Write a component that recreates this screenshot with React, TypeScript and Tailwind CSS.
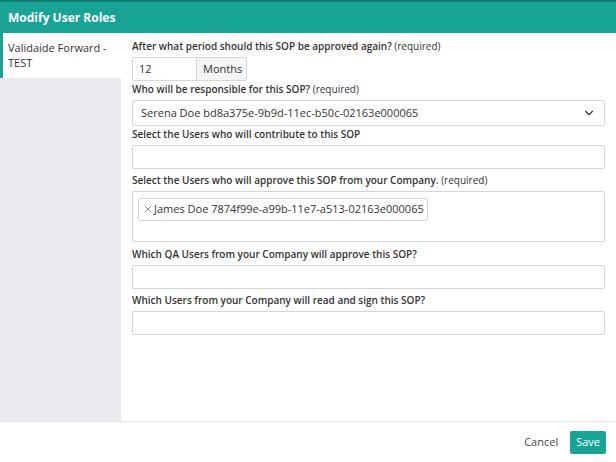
import { ChevronDown, X } from "lucide-react";

const Label = ({ text, req }: { text: string; req?: boolean }) => (
  <div className="text-[10px] font-semibold text-[#333] leading-[14px] mb-[4px]">
    {text}
    {req && <span className="font-normal"> (required)</span>}
  </div>
);

const Box = ({ h = "h-[24px]", children }: { h?: string; children?: React.ReactNode }) => (
  <div className={`${h} w-full border border-[#d4d6da] rounded-[2px] bg-white`}>{children}</div>
);

export default function App() {
  return (
    <div className="w-[616px] h-[462px] flex flex-col bg-white text-[#333]" style={{ fontFamily: "'Open Sans', sans-serif" }}>
      <div className="h-[33px] shrink-0 bg-[#17a495] border-t-2 border-[#0f7f74] flex items-center px-[8px] text-white text-[12px] font-bold">
        Modify User Roles
      </div>
      <div className="flex flex-1 min-h-0">
        <div className="w-[121px] bg-[#e9eaee]">
          <div className="bg-white border-l-[3px] border-[#17a495] h-[45px] pl-[5px] pt-[7px] text-[11px] leading-[15px]">
            Validaide Forward -<br />TEST
          </div>
        </div>
        <div className="flex-1 pl-[11px] pr-[11px] pt-[6px]">
          <Label text="After what period should this SOP be approved again?" req />
          <div className="flex h-[24px] text-[11px] mb-[1px]">
            <div className="w-[65px] border border-[#d4d6da] rounded-l-[2px] px-[6px] flex items-center">12</div>
            <div className="w-[50px] border border-l-0 border-[#d4d6da] bg-[#f4f5f7] rounded-r-[2px] px-[6px] flex items-center">Months</div>
          </div>
          <Label text="Who will be responsible for this SOP?" req />
          <div className="mb-[1px]">
            <Box h="h-[26px]">
              <div className="h-full flex items-center justify-between px-[8px] text-[11px]">
                <span>Serena Doe bd8a375e-9b9d-11ec-b50c-02163e000065</span>
                <ChevronDown size={14} strokeWidth={2} />
              </div>
            </Box>
          </div>
          <Label text="Select the Users who will contribute to this SOP" />
          <div className="mb-[4px]"><Box /></div>
          <Label text="Select the Users who will approve this SOP from your Company." req />
          <div className="mb-[5px]">
            <Box h="h-[51px]">
              <div className="p-[5px]">
                <div className="inline-flex items-center h-[23px] border border-[#d4d6da] rounded-[2px] px-[3px] text-[11px]">
                  <X size={12} strokeWidth={1.5} className="text-[#666]" />
                  <span>James Doe 7874f99e-a99b-11e7-a513-02163e000065</span>
                </div>
              </div>
            </Box>
          </div>
          <Label text="Which QA Users from your Company will approve this SOP?" />
          <div className="mb-[4px]"><Box /></div>
          <Label text="Which Users from your Company will read and sign this SOP?" />
          <Box />
        </div>
      </div>
      <div className="h-[41px] shrink-0 border-t border-[#e3e4e6] flex items-center justify-end gap-[12px] pr-[10px]">
        <span className="text-[11px] text-[#444]">Cancel</span>
        <button className="h-[23px] px-[6px] bg-[#17a495] text-white text-[11px] rounded-[2px]">Save</button>
      </div>
    </div>
  );
}
